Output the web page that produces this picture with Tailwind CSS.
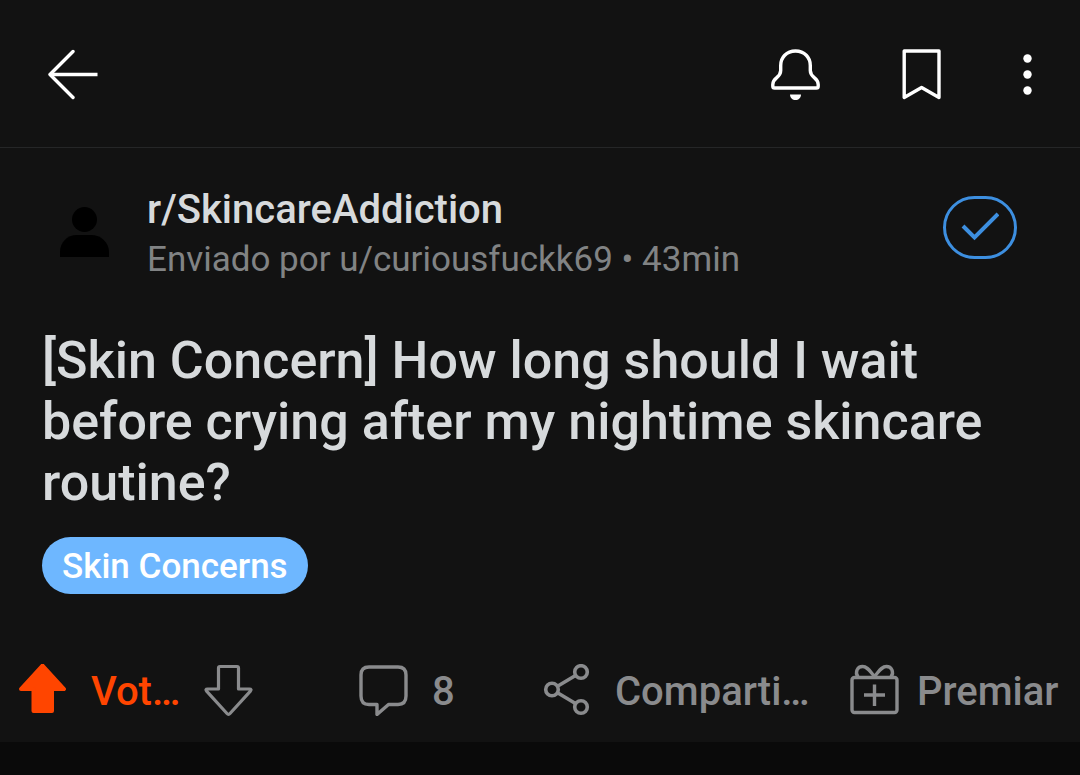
<!DOCTYPE html>
<html lang="es">
  <head>
    <meta charset="UTF-8" />
    <meta name="viewport" content="width=device-width, initial-scale=1.0" />
    <title>r/SkincareAddiction</title>
    <script src="https://cdn.jsdelivr.net/npm/@tailwindcss/browser@4"></script>
  </head>
  <body
    class="min-h-screen bg-[#0a0a0a] font-['Roboto',sans-serif] text-[#d7dadc]"
  >
    <!-- Top bar -->
    <header
      class="flex h-37 items-center justify-between border-b border-[#252627] bg-[#121212] px-12 text-white"
    >
      <button type="button" aria-label="Volver">
        <svg class="block h-[52px] w-[50px]" viewBox="0 0 50 52" fill="none" stroke="currentColor" stroke-width="3.4" stroke-linecap="round" stroke-linejoin="round">
          <path d="M25 3.500 L2 26.500 L25 49.500" />
          <path d="M2 26.500 H49.500" stroke-linecap="butt" />
        </svg>
      </button>
      <div class="flex items-center gap-[81px]">
        <button type="button" aria-label="Notificaciones">
          <svg class="block h-[52px] w-[50px]" viewBox="0 0 50 52" fill="none" stroke="currentColor" stroke-width="3.4" stroke-linejoin="round">
            <path d="M25.500 3 C16.500 3 10.700 9.500 10.700 17.500 V22.500 C10.700 26 9 27.800 6.500 29.800 C4 31.800 2.800 33.800 2.800 36.500 V38.200 Q2.800 40 4.600 40 H46.400 Q48.200 40 48.200 38.200 V36.500 C48.200 33.800 47 31.800 44.500 29.800 C42 27.800 40.300 26 40.300 22.500 V17.500 C40.300 9.500 34.500 3 25.500 3 Z" />
            <path d="M20 46.500 H31 C31 50 28.500 52 25.500 52 C22.500 52 20 50 20 46.500 Z" fill="currentColor" stroke="none" />
          </svg>
        </button>
        <button type="button" aria-label="Guardar">
          <svg class="block h-[52px] w-[40px]" viewBox="0 0 40 52" fill="none" stroke="currentColor" stroke-width="3.4" stroke-linejoin="round">
            <path d="M3.200 3 H38 V49.500 L20.600 39.500 L3.200 49.500 Z" />
          </svg>
        </button>
        <button type="button" aria-label="Más opciones">
          <svg class="block h-[52px] w-[10px]" viewBox="0 0 10 52" fill="currentColor">
            <circle cx="5.500" cy="10.500" r="4.200" />
            <circle cx="5.500" cy="26.500" r="4.200" />
            <circle cx="5.500" cy="42.500" r="4.200" />
          </svg>
        </button>
      </div>
    </header>

    <main class="bg-[#121212] pt-[37px] pb-[26px]">
      <!-- Community and author -->
      <div class="flex items-center px-[42px]">
        <div class="mb-1.5 flex w-[84px] shrink-0 justify-center">
          <svg class="block size-[50px]" viewBox="0 0 50 50" fill="#000" aria-hidden="true">
            <circle cx="25.500" cy="12.500" r="12.500" />
            <path d="M1 50 V45 C1 35.500 8 28 18 28 H32 C42 28 50 35.500 50 45 V50 Z" />
          </svg>
        </div>
        <div class="ml-[21px] grow">
          <a href="#" class="block text-[40px] leading-[50px] font-medium">r/SkincareAddiction</a>
          <p class="text-[35px] leading-[50px] text-[#818384]">
            Enviado por <a href="#">u/curiousfuckk69</a> • 43min
          </p>
        </div>
        <button
          type="button"
          aria-label="Suscrito"
          class="mr-[21px] mb-4 flex h-[63px] w-[74px] shrink-0 items-center justify-center rounded-full border-3 border-[#3d8fe0] text-[#3d8fe0]"
        >
          <svg class="block h-[30px] w-[38px]" viewBox="0 0 38 30" fill="none" stroke="currentColor" stroke-width="4">
            <path d="M2 14 L13.500 25.500 L37 2" />
          </svg>
        </button>
      </div>

      <!-- Title and flair -->
      <div class="mt-[45px] px-[42px]">
        <h1 class="text-[52px] leading-[61px] font-medium">
          [Skin Concern] How long should I wait before crying after my nightime skincare routine?
        </h1>
        <a
          href="#"
          class="mt-6 inline-flex h-[57px] items-center rounded-full bg-[#6eb7ff] px-5 pt-1 text-[35px] font-medium text-white"
          >Skin Concerns</a
        >
      </div>

      <!-- Post actions -->
      <div
        class="mt-[70px] grid grid-cols-[341fr_184fr_306fr_211fr] items-center pr-5 pl-[18px] text-[40px] leading-[48px] font-medium text-[#8a8b8d]"
      >
        <div class="flex items-center gap-6">
          <button type="button" class="flex items-center gap-6 text-[#ff4500]">
            <svg class="block h-[52px] w-[49px]" viewBox="0 0 49 52" fill="currentColor" stroke="currentColor" stroke-width="4" stroke-linejoin="round">
              <path d="M24.500 1.500 L46 25 H34 V47 H15.500 V25 H3 Z" />
            </svg>
            <span class="pt-1">Vot…</span>
          </button>
          <button type="button" aria-label="Votar negativo">
            <svg class="block h-[52px] w-[49px]" viewBox="0 0 49 52" fill="none" stroke="currentColor" stroke-width="3.200" stroke-linejoin="round">
              <path d="M16 2.500 H33 Q34.500 2.500 34.500 4 V25 H45.500 Q48 25 46.400 27.100 L26 49.500 Q24.500 51.100 23 49.500 L2.600 27.100 Q1 25 3.500 25 H14.500 V4 Q14.500 2.500 16 2.500 Z" />
            </svg>
          </button>
        </div>
        <button type="button" class="flex items-center gap-6" aria-label="8 comentarios">
          <svg class="block h-[52px] w-[49px]" viewBox="0 0 49 52" fill="none" stroke="currentColor" stroke-width="3.400" stroke-linejoin="round">
            <path d="M10 3 H39 Q47 3 47 11 V32 Q47 40.500 39 40.500 H29.500 L18 50.500 V40.500 H10 Q2 40.500 2 32 V11 Q2 3 10 3 Z" />
          </svg>
          <span class="pt-1">8</span>
        </button>
        <button type="button" class="flex items-center gap-6" aria-label="Compartir">
          <svg class="block h-[52px] w-[48px]" viewBox="0 0 48 52" fill="none" stroke="currentColor" stroke-width="3.600">
            <circle cx="9" cy="25.500" r="6.300" />
            <circle cx="38" cy="8" r="6.300" />
            <circle cx="38" cy="43" r="6.300" />
            <path d="M14.500 22.200 L32.500 11.500 M14.500 28.800 L32.500 39.500" />
          </svg>
          <span class="pt-1">Comparti…</span>
        </button>
        <button type="button" class="flex items-center gap-[18px]">
          <svg class="block h-[52px] w-[50px]" viewBox="0 0 50 52" fill="none" stroke="currentColor" stroke-width="3.400" stroke-linejoin="round">
            <rect x="3" y="13.500" width="45" height="35" rx="2.500" />
            <path d="M9 13 C5.500 8 8.500 2.500 13.500 2.500 C18.500 2.500 21 7.500 25.500 12.500 C30 7.500 32.500 2.500 37.500 2.500 C42.500 2.500 45.500 8 42 13" />
            <path d="M25.500 20.500 V42 M15 31 H36" />
          </svg>
          <span class="pt-1">Premiar</span>
        </button>
      </div>
    </main>
  </body>
</html>
